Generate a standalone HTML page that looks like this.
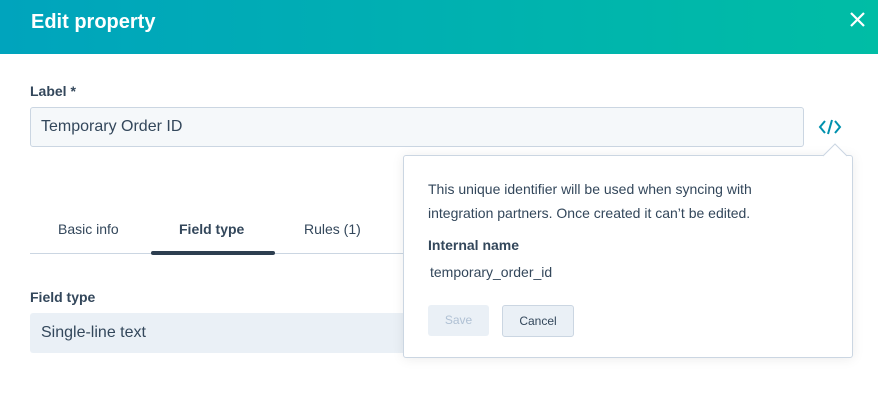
<!DOCTYPE html><html><head><style>
body{margin:0;width:878px;height:401px;overflow:hidden;background:#fff;font-family:"Liberation Sans",sans-serif;color:#33475b;position:relative}
.a{position:absolute}
.hdr{left:0;top:0;width:878px;height:54px;background:linear-gradient(90deg,#00a4bd,#00bda5)}
</style></head><body>
<div class="a hdr"></div>
<div class="a" style="left:31px;top:11px;font-size:20px;font-weight:bold;color:#fff">Edit property</div>
<svg class="a" style="left:849px;top:11px" width="17" height="17"><path d="M2 2L15 15M15 2L2 15" stroke="#fff" stroke-width="2.2"/></svg>
<div class="a" style="left:30px;top:83px;font-size:14px;font-weight:bold">Label *</div>
<div class="a" style="left:30px;top:107px;width:772px;height:38px;background:#f5f8fa;border:1px solid #cbd6e2;border-radius:3px"></div>
<div class="a" style="left:41px;top:118px;font-size:16px">Temporary Order ID</div>
<svg class="a" style="left:818px;top:118px" width="24" height="18"><path d="M7 3L2 9L7 15M17 3L22 9L17 15M14 2L10 16" stroke="#0091ae" stroke-width="2" fill="none"/></svg>
<div class="a" style="left:30px;top:253px;width:373px;height:1px;background:#cbd6e2"></div>
<div class="a" style="left:58px;top:221px;font-size:14px">Basic info</div>
<div class="a" style="left:179px;top:221px;font-size:14px;font-weight:bold">Field type</div>
<div class="a" style="left:304px;top:221px;font-size:14px">Rules (1)</div>
<div class="a" style="left:151px;top:251px;width:124px;height:4px;background:#2d3e50;border-radius:2px"></div>
<div class="a" style="left:30px;top:289px;font-size:14px;font-weight:bold">Field type</div>
<div class="a" style="left:30px;top:313px;width:380px;height:40px;background:#eaf0f6;border-radius:3px"></div>
<div class="a" style="left:41px;top:324px;font-size:16px">Single-line text</div>
<div class="a" style="left:403px;top:155px;width:448px;height:201px;background:#fff;border:1px solid #cbd6e2;border-radius:3px;box-shadow:0 1px 12px rgba(0,0,0,.08)"></div>
<svg class="a" style="left:823px;top:143px" width="26" height="14"><path d="M0 13L12 1L24 13" fill="#fff" stroke="#cbd6e2"/></svg>
<div class="a" style="left:428px;top:177px;font-size:14px;line-height:24px;width:360px">This unique identifier will be used when syncing with integration partners. Once created it can’t be edited.</div>
<div class="a" style="left:428px;top:237px;font-size:14px;font-weight:bold">Internal name</div>
<div class="a" style="left:430px;top:264px;font-size:14px">temporary_order_id</div>
<div class="a" style="left:428px;top:305px;width:61px;height:31px;background:#eaf0f6;border-radius:3px;color:#b0c1d4;font-size:12px;text-align:center;line-height:31px">Save</div>
<div class="a" style="left:502px;top:305px;width:70px;height:30px;background:#eaf0f6;border:1px solid #cbd6e2;border-radius:3px;font-size:12px;text-align:center;line-height:30px">Cancel</div>
</body></html>
